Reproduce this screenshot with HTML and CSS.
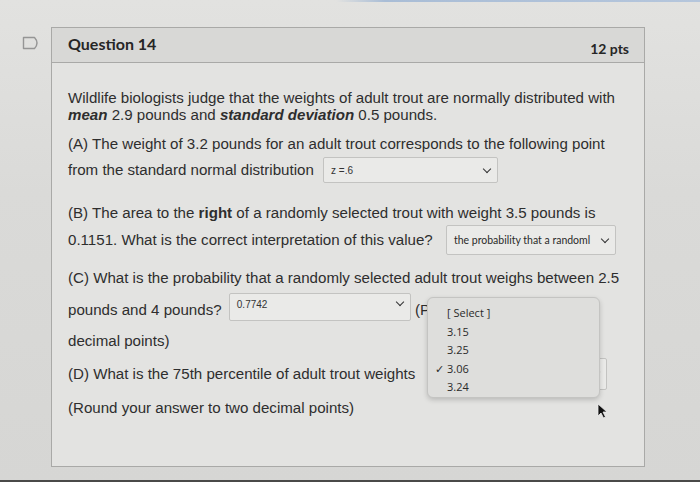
FILE: index.html
```html
<!DOCTYPE html>
<html>
<head>
<meta charset="utf-8">
<link rel="stylesheet" href="styles.css">
</head>
<body>
<div class="screen">
  <div class="topline"></div>
  <div class="page">
    <div class="flagcol">
      <svg class="flag" width="19" height="14" viewBox="0 0 19 14"><path d="M1.5 1.5 H12.5 Q17.5 7 12.5 12.5 H1.5 Z" fill="none" stroke="#959595" stroke-width="1.4" stroke-linejoin="round"/></svg>
    </div>
    <div class="card">
      <div class="card-head">
        <span class="q-title">Question 14</span>
        <span class="q-pts">12 pts</span>
      </div>
      <div class="card-body">
        <p class="intro">Wildlife biologists judge that the weights of adult trout are normally distributed with <b><i>mean</i></b> 2.9 pounds and <b><i>standard deviation</i></b> 0.5 pounds.</p>
        <p class="pa">(A) The weight of 3.2 pounds for an adult trout corresponds to the following point from the standard normal distribution <span class="sel sel-a"><span class="val small">z =.6</span><span class="chev"></span></span></p>
        <p class="pb">(B) The area to the <b>right</b> of a randomly selected trout with weight 3.5 pounds is 0.1151. What is the correct interpretation of this value? <span class="sel sel-b"><span class="val lato">the probability that a randoml</span><span class="chev"></span></span></p>
        <p class="pc">(C) What is the probability that a randomly selected adult trout weighs between 2.5 pounds and 4 pounds? <span class="sel sel-c"><span class="val small top">0.7742</span><span class="chev top"></span></span> <span class="nowrap">(Please round to four</span><br>decimal points)</p>
        <p class="pd">(D) What is the 75th percentile of adult trout weights <span class="sel sel-d"><span class="val small">3.06</span><span class="chev"></span></span><br>(Round your answer to two decimal points)</p>
      </div>
    </div>
  </div>
  <div class="popup">
    <div class="opt">[ Select ]</div>
    <div class="opt">3.15</div>
    <div class="opt">3.25</div>
    <div class="opt checked"><span class="tick">✓</span>3.06</div>
    <div class="opt">3.24</div>
  </div>
  <svg class="cursor" width="12" height="16" viewBox="0 0 12 16"><path d="M1 1 L1 13 L4 10 L6.5 15 L8.5 14 L6 9 L10 9 Z" fill="#111" stroke="#eee" stroke-width="0.8"/></svg>
  <div class="bezel"></div>
</div>
</body>
</html>
```

FILE: styles.css
```css
html, body {
  margin: 0;
  padding: 0;
}
body {
  width: 700px;
  height: 482px;
  overflow: hidden;
  background: #d9d9d7;
  font-family: "Liberation Sans", Arial, sans-serif;
  color: #2e2e2e;
}
.screen {
  position: relative;
  width: 700px;
  height: 482px;
  background: linear-gradient(180deg, #e2e2e0 0%, #dadad8 40%, #d6d6d4 100%);
}
.topline {
  height: 2px;
  background: linear-gradient(90deg, rgba(180,195,215,0) 0%, rgba(170,190,215,0) 48%, #a9bdd6 55%, #b5c6dc 100%);
}
.page {
  display: flex;
  padding-top: 25px;
}
.flagcol {
  width: 51px;
  flex: none;
}
.flag {
  display: block;
  margin: 9px 0 0 22px;
}
.card {
  width: 592px;
  height: 438px;
  border: 1px solid #a9a9a7;
  background: #e3e3e1;
  flex: none;
}
.card-head {
  height: 34px;
  background: #d8d8d6;
  border-bottom: 1px solid #a9a9a7;
  display: flex;
  align-items: center;
  justify-content: space-between;
  padding: 0 15px 0 16px;
  font-family: Lato, "Open Sans", sans-serif;
  font-weight: 700;
  color: #262626;
}
.q-title {
  font-size: 16px;
  margin-top: -3px;
}
.q-pts {
  font-size: 14px;
  margin-top: 6px;
}
.card-body {
  padding: 26px 16px 0 16px;
  font-size: 15.1px;
}
.card-body p {
  margin: 0;
}
.intro {
  line-height: 17px;
}
.pa {
  margin-top: 8px !important;
  line-height: 26px;
}
.pb {
  margin-top: 15px !important;
  line-height: 27px;
}
.pc {
  margin-top: 6px !important;
  line-height: 31.5px;
}
.pd {
  margin-top: 0 !important;
  line-height: 33px;
}
.sel {
  display: inline-flex;
  justify-content: space-between;
  align-items: center;
  vertical-align: middle;
  box-sizing: border-box;
  border: 1px solid #c3c3c1;
  border-radius: 2px;
  background: #eaeae8;
  line-height: normal;
  padding: 0 7px 0 7px;
  position: relative;
  top: -1px;
}
.sel-a { width: 175px; height: 26px; margin-left: 5px; }
.sel-b { width: 170px; height: 30px; margin-left: 9px; }
.sel-c { width: 182px; height: 28px; margin-left: 3px; align-items: flex-start; padding-top: 5px; top: -4px; }
.sel-d { width: 178px; height: 32px; margin-left: 9px; }
.val.small {
  font-size: 10px;
  color: #333;
}
.val.lato {
  font-family: Lato, "Open Sans", sans-serif;
  font-size: 10.5px;
  color: #2a2a2a;
}
.chev {
  width: 5px;
  height: 5px;
  border-right: 1.6px solid #333;
  border-bottom: 1.6px solid #333;
  transform: rotate(45deg);
  margin-top: -3px;
}
.chev.top {
  margin-top: 0;
}
.nowrap {
  white-space: nowrap;
}
.popup {
  position: absolute;
  left: 427px;
  top: 297px;
  width: 173px;
  height: 101px;
  box-sizing: border-box;
  border-radius: 6px;
  background: #dededc;
  border: 1px solid #c4c4c2;
  box-shadow: 0 2px 5px rgba(0,0,0,0.18);
  padding-top: 6px;
  font-family: "Open Sans", Lato, sans-serif;
  font-size: 11px;
  color: #2a2a2a;
}
.opt {
  height: 18.5px;
  line-height: 18.5px;
  padding-left: 19px;
  position: relative;
}
.tick {
  position: absolute;
  left: 7px;
  font-size: 11px;
}
.cursor {
  position: absolute;
  left: 597px;
  top: 403px;
}
.bezel {
  position: absolute;
  left: 0;
  right: 0;
  bottom: 0;
  height: 2px;
  background: #4a4a48;
}
```
